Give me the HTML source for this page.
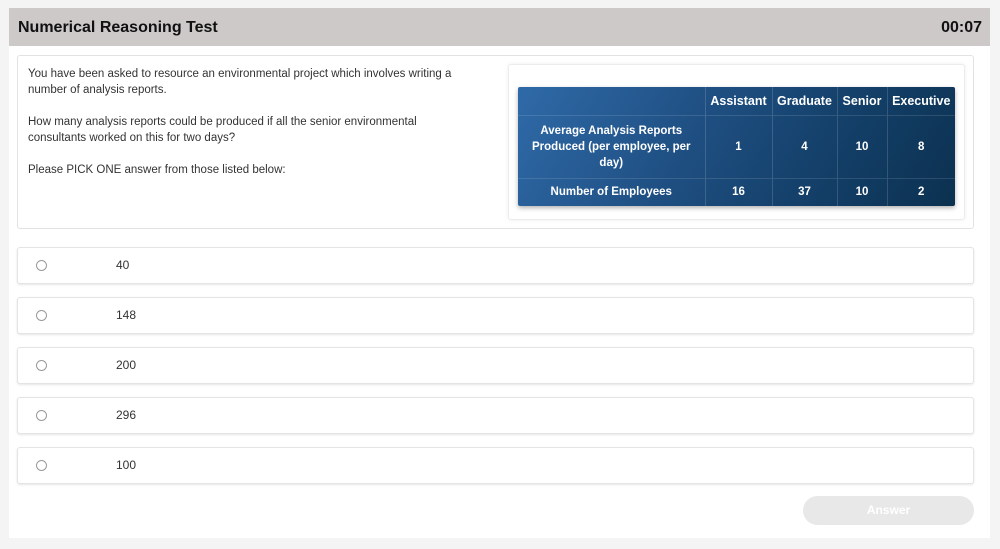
<!DOCTYPE html>
<html><head><style>
body{margin:0;width:1000px;height:549px;background:#f4f4f4;font-family:"Liberation Sans",sans-serif;position:relative;overflow:hidden}
.main{position:absolute;left:9px;top:8px;width:981px;height:530px;background:#fff}
.hdr{position:absolute;left:9px;top:8px;width:981px;height:38px;background:#cdc9c8}
.hdr b{position:absolute;top:11px;font-size:16px;color:#111}
.q{position:absolute;left:17px;top:55px;width:955px;height:172px;border:1px solid #e2e2e2;border-radius:3px;background:#fff}
.qt{position:absolute;left:10px;top:10px;width:450px;font-size:11.5px;line-height:16px;color:#333}
.qt p{margin:0 0 16px}
.tc{position:absolute;left:490px;top:8px;width:455px;height:154px;border:1px solid #ececec;border-radius:3px;box-shadow:0 0 4px #eee}
table{position:absolute;left:518px;top:87px;width:437px;height:119px;border-collapse:collapse;table-layout:fixed;background:linear-gradient(120deg,#2f6aa8 0%,#1f4f82 40%,#133f68 70%,#0c3150 100%);color:#fff;font-weight:bold;font-size:11.5px;text-align:center;box-shadow:0 2px 5px rgba(0,0,0,.3);border-radius:2px}
td{border-left:1px solid rgba(255,255,255,.15);border-top:1px solid rgba(255,255,255,.12);padding:0 3px;line-height:16px}
tr td:first-child{border-left:none}
tr:first-child td{border-top:none;font-size:12.5px;padding:0 1px}
.o{position:absolute;left:17px;width:955px;height:35px;border:1px solid #e4e4e4;border-radius:3px;box-shadow:0 1px 2px #e6e6e6;background:#fff;font-size:12px;color:#333}
.o i{position:absolute;left:18px;top:12px;width:9px;height:9px;border:1px solid #999;border-radius:50%}
.o span{position:absolute;left:98px;top:10px}
.btn{position:absolute;left:803px;top:496px;width:171px;height:29px;border-radius:15px;background:#e8e8e8;color:#fff;font-weight:bold;font-size:12px;text-align:center;line-height:29px}
</style></head><body>
<div class="main"></div>
<div class="hdr"><b style="left:9px">Numerical Reasoning Test</b><b style="right:8px">00:07</b></div>
<div class="q"><div class="qt"><p>You have been asked to resource an environmental project which involves writing a number of analysis reports.</p><p>How many analysis reports could be produced if all the senior environmental consultants worked on this for two days?</p><p>Please PICK ONE answer from those listed below:</p></div><div class="tc"></div></div>
<table>
<colgroup><col style="width:187px"><col style="width:67px"><col style="width:65px"><col style="width:50px"><col style="width:68px"></colgroup>
<tr style="height:28px"><td></td><td>Assistant</td><td>Graduate</td><td>Senior</td><td>Executive</td></tr>
<tr style="height:63px"><td>Average Analysis Reports Produced (per employee, per day)</td><td>1</td><td>4</td><td>10</td><td>8</td></tr>
<tr style="height:28px"><td>Number of Employees</td><td>16</td><td>37</td><td>10</td><td>2</td></tr>
</table>
<div class="o" style="top:247px"><i></i><span>40</span></div>
<div class="o" style="top:297px"><i></i><span>148</span></div>
<div class="o" style="top:347px"><i></i><span>200</span></div>
<div class="o" style="top:397px"><i></i><span>296</span></div>
<div class="o" style="top:447px"><i></i><span>100</span></div>
<div class="btn">Answer</div>
</body></html>
